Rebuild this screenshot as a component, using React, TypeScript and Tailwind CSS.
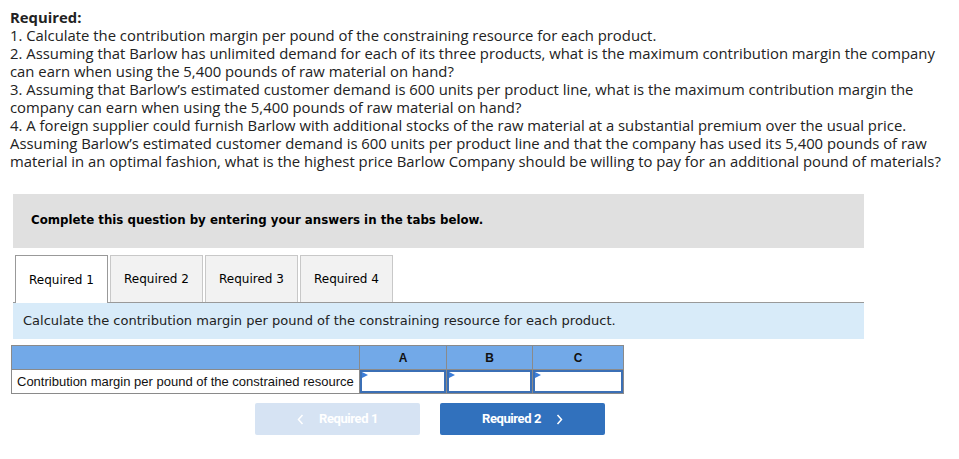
import React from "react";

const para = "font-['Open_Sans',sans-serif] text-[14.85px] leading-[18px] text-[#222]";

function InputCell() {
  return (
    <td className="border border-[#8a8a8a] p-0 h-[23px] bg-white">
      <div className="relative h-[23px] border-2 border-[#3b6fb5] bg-white">
        <svg className="absolute left-0 top-0" width="6" height="6" viewBox="0 0 6 6">
          <polygon points="0,0 6,3 0,6" fill="#3b7dd8" />
        </svg>
      </div>
    </td>
  );
}

export default function App() {
  const tabs = ["Required 1", "Required 2", "Required 3", "Required 4"];
  return (
    <div className="w-[959px] h-[459px] bg-white overflow-hidden">
      <div className={`${para} ml-[10px] w-[938px] pt-[8px]`}>
        <div className="font-bold">Required:</div>
        <div>1. Calculate the contribution margin per pound of the constraining resource for each product.</div>
        <div>
          2. Assuming that Barlow has unlimited demand for each of its three products, what is the maximum contribution margin the company can earn when using the 5,400 pounds of raw material on hand?
        </div>
        <div>
          3. Assuming that Barlow’s estimated customer demand is 600 units per product line, what is the maximum contribution margin the company can earn when using the 5,400 pounds of raw material on hand?
        </div>
        <div>
          4. A foreign supplier could furnish Barlow with additional stocks of the raw material at a substantial premium over the usual price. Assuming Barlow’s estimated customer demand is 600 units per product line and that the company has used its 5,400 pounds of raw material in an optimal fashion, what is the highest price Barlow Company should be willing to pay for an additional pound of materials?
        </div>
      </div>

      <div className="ml-[13px] w-[851px] mt-[24px] h-[54px] bg-[#e0e0e0] flex items-center pl-[18px] font-['DejaVu_Sans',Verdana,sans-serif] font-bold text-[11.8px] text-black">
        Complete this question by entering your answers in the tabs below.
      </div>

      <div className="ml-[13px] w-[851px] mt-[7px] flex gap-[2px] pl-[2px] border-b border-[#999] h-[48px] items-end">
        {tabs.map((t, i) => (
          <div
            key={t}
            className={
              i === 0
                ? "w-[93px] h-[48px] -mb-px bg-white border border-b-0 border-[#999] flex items-center justify-center font-['DejaVu_Sans',Verdana,sans-serif] text-[12px] text-black"
                : "w-[93px] h-[47px] bg-[#f2f2f2] border border-b-0 border-[#c8c8c8] flex items-center justify-center font-['DejaVu_Sans',Verdana,sans-serif] text-[12px] text-black"
            }
          >
            {t}
          </div>
        ))}
      </div>

      <div className="ml-[13px] w-[851px] h-[36px] bg-[#d8ebf9] flex items-center pl-[10px] font-['DejaVu_Sans',Verdana,sans-serif] text-[13px] text-[#222]">
        Calculate the contribution margin per pound of the constraining resource for each product.
      </div>

      <table className="ml-[11px] mt-[6px] border-collapse font-['Liberation_Sans',Arial,sans-serif] text-[13px] text-[#111]">
        <thead>
          <tr className="bg-[#72a9e8] h-[24px]">
            <th className="w-[348px] border border-[#8a8a8a]"></th>
            <th className="w-[87px] border border-[#8a8a8a] font-bold text-[12px]">A</th>
            <th className="w-[86px] border border-[#8a8a8a] font-bold text-[12px]">B</th>
            <th className="w-[91px] border border-[#8a8a8a] font-bold text-[12px]">C</th>
          </tr>
        </thead>
        <tbody>
          <tr>
            <td className="border border-[#8a8a8a] pl-[5px] pr-[4px] whitespace-nowrap h-[23px]">
              Contribution margin per pound of the constrained resource
            </td>
            <InputCell />
            <InputCell />
            <InputCell />
          </tr>
        </tbody>
      </table>

      <div className="flex gap-[20px] ml-[255px] mt-[9px] font-['Roboto',sans-serif] font-bold text-[13px] text-white">
        <div className="w-[165px] h-[32px] rounded-[2px] bg-[#d6e3f3] flex items-center justify-center gap-[15px] tracking-[-0.4px]">
          <svg width="7" height="11" viewBox="0 0 7 11" fill="none" stroke="#fff" strokeWidth="1.5">
            <polyline points="5.5,1 1.5,5.5 5.5,10" />
          </svg>
          <span>Required 1</span>
        </div>
        <div className="w-[165px] h-[32px] rounded-[2px] bg-[#3171bd] flex items-center justify-center gap-[15px] tracking-[-0.4px]">
          <span>Required 2</span>
          <svg width="7" height="11" viewBox="0 0 7 11" fill="none" stroke="#fff" strokeWidth="1.5">
            <polyline points="1.5,1 5.5,5.5 1.5,10" />
          </svg>
        </div>
      </div>
    </div>
  );
}
